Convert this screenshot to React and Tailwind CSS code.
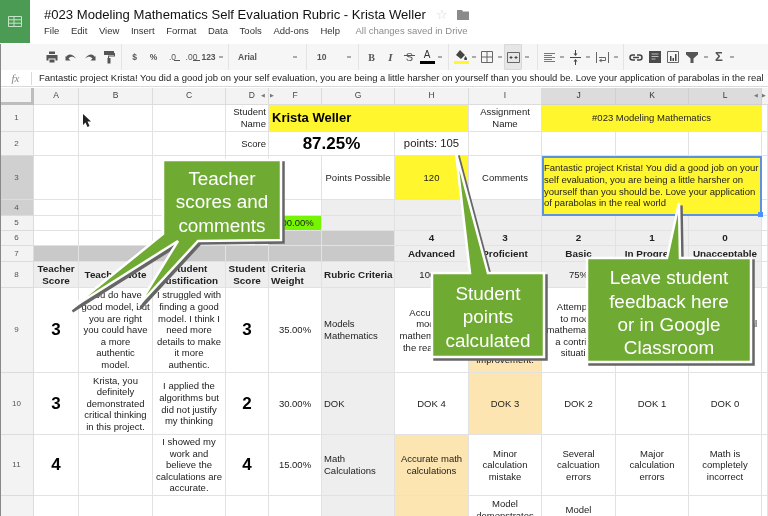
const menus = ['File', 'Edit', 'View', 'Insert', 'Format', 'Data', 'Tools', 'Add-ons', 'Help']

function Tool({ w = 'w-[19px]', className = '', children }) {
  return <div className={`${w} h-[26px] shrink-0 flex items-center justify-center text-[#555] ${className}`}>{children}</div>
}

function Caret({ w = 'w-[9px]' }) {
  return (
    <div className={`${w} shrink-0 flex items-center justify-center`}>
      <div className="w-[4px] h-[1.5px] bg-[#aaa]" />
    </div>
  )
}

function Sep({ className = '' }) {
  return <div className={`w-px h-[26px] shrink-0 bg-[#e4e4e4] ${className}`} />
}

function Ico({ w = 14, h = 14, children }) {
  return (
    <svg width={w} height={h} viewBox={`0 0 ${w} ${h}`} fill="none">
      {children}
    </svg>
  )
}

function Toolbar() {
  return (
    <div className="h-[26px] bg-[#f6f6f6] flex items-center pl-[42px] text-[8.5px] font-bold">
      <Tool>
        <Ico>
          <path d="M4 1.5h6v2.5H4zM1.5 5h11v5.5h-2V8.5h-7v2h-2zM4.500 9.500h5v3h-5z" fill="#555" />
        </Ico>
      </Tool>
      <Tool>
        <Ico>
          <path d="M2 7c2-3.500 6.500-3.500 10 1.500C9 6 6.500 6 4.500 8.500L6.500 10.500H1.500V5.500z" fill="#555" />
        </Ico>
      </Tool>
      <Tool>
        <Ico>
          <path d="M12 7C10 3.500 5.500 3.500 2 8.500 5 6 7.500 6 9.500 8.500L7.500 10.500h5V5.500z" fill="#555" />
        </Ico>
      </Tool>
      <Tool>
        <Ico>
          <path d="M2 1h10v4H2zM12 3h1v3.500H7v1.500H8.500v5.500h-3V8H6V5.500h6z" fill="#555" />
        </Ico>
      </Tool>
      <Sep className="ml-[3px] mr-[3px]" />
      <Tool>$</Tool>
      <Tool>%</Tool>
      <Tool>
        <div className="relative font-normal">
          .0
          <div className="absolute left-[5px] top-[9px] w-[6px] h-[1.5px] bg-[#555]" />
        </div>
      </Tool>
      <Tool>
        <div className="relative font-normal">
          .00
          <div className="absolute left-[7px] top-[9px] w-[7px] h-[1.5px] bg-[#555]" />
        </div>
      </Tool>
      <Tool w="w-[15px]">123</Tool>
      <Caret />
      <Sep className="ml-[3px]" />
      <div className="w-[61px] shrink-0 pl-[9px] text-[#555]">Arial</div>
      <Caret />
      <Sep className="ml-[7px]" />
      <div className="w-[37px] shrink-0 pl-[10px] text-[#555]">10</div>
      <Caret />
      <Sep className="ml-[5px] mr-[3px]" />
      <Tool className="font-['Liberation_Serif',serif] text-[10px]">B</Tool>
      <Tool className="font-['Liberation_Serif',serif] text-[11px] italic">I</Tool>
      <Tool>
        <div className="relative text-[11px] font-normal">
          S
          <div className="absolute left-[-2px] top-[6px] w-[11px] h-px bg-[#555]" />
        </div>
      </Tool>
      <Tool w="w-[16px]">
        <div className="flex flex-col items-center text-[10px] font-normal leading-[10px] text-[#333]">
          A
          <div className="w-[15px] h-[2.5px] bg-black mt-[1px]" />
        </div>
      </Tool>
      <Caret w="w-[10px]" />
      <Sep className="ml-[3px] mr-[3px]" />
      <Tool w="w-[18px]">
        <div className="flex flex-col items-center">
          <Ico w={14} h={10}>
            <path d="M6 0l5 5-4 4-5-4zM11.500 6c1 1.500 1.500 2 1.500 3a1.300 1.300 0 0 1-2.800 0c0-1 .500-1.500 1.300-3z" fill="#444" />
          </Ico>
          <div className="w-[15px] h-[3px] bg-[#fff62e] mt-[1px]" />
        </div>
      </Tool>
      <Caret w="w-[8px]" />
      <Tool w="w-[18px]">
        <Ico w={12} h={12}>
          <path d="M.5.5h11v11H.5zM6 .5v11M.5 6h11" stroke="#666" />
        </Ico>
      </Tool>
      <Caret w="w-[8px]" />
      <Tool w="w-[18px]" className="bg-[#e6e6e6] border border-[#d8d8d8] rounded-[1px]">
        <Ico w={13} h={11}>
          <path d="M.5.5h12v10H.5z" stroke="#666" />
          <path d="M2.500 5.500h3M4 4v3M7.500 5.500h3M9 4v3" stroke="#444" />
        </Ico>
      </Tool>
      <Caret />
      <Sep className="ml-[6px] mr-[2px]" />
      <Tool w="w-[18px]">
        <Ico w={11} h={9}>
          <path d="M0 .5h11M0 2.500h8M0 4.500h11M0 6.500h8M0 8.500h11" stroke="#777" />
        </Ico>
      </Tool>
      <Caret w="w-[8px]" />
      <Tool w="w-[18px]">
        <Ico w={11} h={15}>
          <path d="M0 7.500h11M5.500 0v5M5.500 10v5" stroke="#444" />
          <path d="M3.500 3.500h4l-2 2.500zM3.500 11.500h4l-2-2.500z" fill="#444" />
        </Ico>
      </Tool>
      <Caret w="w-[8px]" />
      <Tool w="w-[20px]">
        <Ico w={13} h={11}>
          <path d="M.5 0v11M12.500 0v11M3 5.500h6.500v3H5" stroke="#666" />
          <path d="M3 8.500l2.500-2v4z" fill="#666" />
        </Ico>
      </Tool>
      <Caret w="w-[7px]" />
      <Sep className="ml-[4px] mr-[3px]" />
      <Tool w="w-[18px]">
        <Ico w={14} h={7}>
          <path d="M6 1H3.500a2.500 2.500 0 0 0 0 5H6M8 1h2.500a2.500 2.500 0 0 1 0 5H8M4 3.500h6" stroke="#444" strokeWidth="1.500" />
        </Ico>
      </Tool>
      <Tool>
        <Ico w={12} h={12}>
          <path d="M0 0h12v12H0z" fill="#4a4a4a" />
          <path d="M2.500 3h7M2.500 5.500h7M2.500 8h4" stroke="#bbb" />
        </Ico>
      </Tool>
      <Tool w="w-[18px]">
        <Ico w={14} h={14}>
          <path d="M1.500 1.500h11v11h-11z" stroke="#666" />
          <path d="M4 6h1.500v5H4zM6.500 8H8v3H6.500zM9 4h1.500v7H9z" fill="#444" />
        </Ico>
      </Tool>
      <Tool>
        <Ico w={12} h={11}>
          <path d="M0 0h12v2.500L7.500 6.500V11h-3V6.500L0 2.500z" fill="#555" />
        </Ico>
      </Tool>
      <Caret />
      <Tool w="w-[18px]" className="text-[13px]">Σ</Tool>
      <Caret w="w-[8px]" />
    </div>
  )
}

// one spreadsheet cell, lines are broken by hand with \n
function C({ className = '', children }) {
  return (
    <div className={`border-r border-b border-[#e2e2e2] flex items-center justify-center text-center whitespace-pre-line overflow-hidden min-w-0 ${className}`}>
      {children}
    </div>
  )
}

function RowHead({ dark, children }) {
  return (
    <div className={`border-r border-b border-[#dcdcdc] flex items-center justify-center text-[8px] text-[#555] ${dark ? 'bg-[#d0d0d0]' : 'bg-[#f3f3f3]'}`}>
      {children}
    </div>
  )
}

const num = 'text-[17px] font-bold text-black'
const grey = 'bg-[#eeeeee]'
const dark = 'bg-[#c9c9c9]'
const yellow = 'bg-[#fff62e]'
const orange = 'bg-[#fce5b0]'
const bold = 'font-bold text-[9.9px] bg-[#eeeeee]'

function Sheet() {
  return (
    <div className="mt-px grid grid-cols-[34px_45px_74px_73px_43px_53px_73px_74px_73px_74px_73px_73px_6px] grid-rows-[17px_27px_24px_44px_16px_15px_15px_16px_26px_85px_62px_61px_60px] text-[9.5px] leading-[11.6px] text-[#222]">
      <div className="bg-[#f3f3f3] border-r-[3px] border-b-[3px] border-[#bdbdbd]" />
      {['A', 'B', 'C'].map((h) => (
        <div key={h} className="bg-[#f3f3f3] border-r border-b border-[#dcdcdc] flex items-center justify-center text-[8.5px] text-[#444]">{h}</div>
      ))}
      <div className="bg-[#f3f3f3] border-r border-b border-[#dcdcdc] flex items-center justify-end pr-[3px] gap-[6px] text-[8.5px] text-[#444]">
        D <span className="text-[5px] text-[#777]">◀</span>
      </div>
      <div className="relative bg-[#f3f3f3] border-r border-b border-[#dcdcdc] flex items-center justify-center text-[8.5px] text-[#444]">
        <span className="absolute left-[1px] text-[5px] text-[#777]">▶</span>F
      </div>
      {['G', 'H', 'I'].map((h) => (
        <div key={h} className="bg-[#f3f3f3] border-r border-b border-[#dcdcdc] flex items-center justify-center text-[8.5px] text-[#444]">{h}</div>
      ))}
      {['J', 'K'].map((h) => (
        <div key={h} className="bg-[#dcdcdc] border-r border-b border-[#d0d0d0] flex items-center justify-center text-[8.5px] text-[#333]">{h}</div>
      ))}
      <div className="relative bg-[#dcdcdc] border-r border-b border-[#d0d0d0] flex items-center justify-center text-[8.5px] text-[#333]">
        L<span className="absolute right-[3px] text-[5px] text-[#777]">◀</span>
      </div>
      <div className="bg-[#f3f3f3] border-b border-[#dcdcdc] flex items-center text-[5px] text-[#777]">▶</div>

      <RowHead>1</RowHead>
      <C /><C /><C />
      <C className="justify-end text-right pr-[2px]">{'Student\nName'}</C>
      <C className={`col-span-3 justify-start pl-[3px] text-[13px] font-bold text-black ${yellow}`}>Krista Weller</C>
      <C>{'Assignment\nName'}</C>
      <C className={`col-span-3 ${yellow}`}>#023 Modeling Mathematics</C>
      <C />

      <RowHead>2</RowHead>
      <C /><C /><C />
      <C className="justify-end pr-[2px]">Score</C>
      <C className="col-span-2 text-[17px] font-bold text-black">87.25%</C>
      <C className="text-[11.3px]">points: 105</C>
      <C /><C /><C /><C /><C />

      <RowHead dark>3</RowHead>
      <C /><C /><C /><C /><C />
      <C>Points Possible</C>
      <C className={yellow}>120</C>
      <C>Comments</C>
      <div className={`relative col-span-3 row-span-2 border-2 border-[#5b93e0] flex items-center pb-[1px] ${yellow}`}>
        <div className="whitespace-pre-line">
          {'Fantastic project Krista! You did a good job on your\nself evaluation, you are being a little harsher on\nyourself than you should be. Love your application\nof parabolas in the real world'}
        </div>
        <div className="absolute right-[-3px] bottom-[-3px] w-[5px] h-[5px] bg-[#4d90fe]" />
      </div>
      <C />

      <RowHead dark>4</RowHead>
      <C /><C /><C /><C /><C />
      <C className={grey} /><C className={grey} /><C className={grey} />
      <C />

      <RowHead>5</RowHead>
      <C /><C /><C /><C />
      <C className="bg-[#76f500]">100.00%</C>
      <C className={grey} /><C className={grey} /><C className={grey} /><C className={grey} /><C className={grey} /><C className={grey} />
      <C />

      <RowHead>6</RowHead>
      <C /><C /><C /><C />
      <C className={dark} /><C className={dark} />
      <C className={bold}>4</C><C className={bold}>3</C><C className={bold}>2</C><C className={bold}>1</C><C className={bold}>0</C>
      <C />

      <RowHead>7</RowHead>
      <C className={dark} /><C className={dark} /><C className={dark} /><C className={dark} /><C className={dark} /><C className={dark} />
      <C className={bold}>Advanced</C><C className={bold}>Proficient</C><C className={bold}>Basic</C><C className={bold}>In Progress</C><C className={bold}>Unacceptable</C>
      <C />

      <RowHead>8</RowHead>
      <C className={bold}>{'Teacher\nScore'}</C>
      <C className={bold}>Teacher Note</C>
      <C className={bold}>{'Student\nJustification'}</C>
      <C className={bold}>{'Student\nScore'}</C>
      <C className={`${bold} justify-start pl-[2px] text-left`}>{'Criteria\nWeight'}</C>
      <C className={`${bold} justify-start pl-[2px] text-left whitespace-nowrap!`}>Rubric Criteria</C>
      <C className={grey}>100%</C><C className={grey}>85%</C><C className={grey}>75%</C><C className={grey}>65%</C><C className={grey}>0%</C>
      <C />

      <RowHead>9</RowHead>
      <C className={num}>3</C>
      <C>{'You do have\ngood model, but\nyou are right\nyou could have\na more\nauthentic\nmodel.'}</C>
      <C>{'I struggled with\nfinding a good\nmodel. I think I\nneed more\ndetails to make\nit more\nauthentic.'}</C>
      <C className={num}>3</C>
      <C>35.00%</C>
      <C className={`${grey} justify-start pl-[2px] text-left`}>{'Models\nMathematics'}</C>
      <C>{'Accurately\nmodels\nmathematics in\nthe real world'}</C>
      <C className={`${orange} items-end pb-[6px]`}>improvement.</C>
      <C>{'Attempted\nto model\nmathematics in\na contrived\nsituation'}</C>
      <C>{'Model does\nnot fit\nthe situation'}</C>
      <C>{'Did not create\na mathematical\nmodel of the\nsituation'}</C>
      <C />

      <RowHead>10</RowHead>
      <C className={num}>3</C>
      <C>{'Krista, you\ndefinitely\ndemonstrated\ncritical thinking\nin this project.'}</C>
      <C>{'I applied the\nalgorithms but\ndid not justify\nmy thinking'}</C>
      <C className={num}>2</C>
      <C>30.00%</C>
      <C className={`${grey} justify-start pl-[2px] text-left`}>DOK</C>
      <C>DOK 4</C>
      <C className={orange}>DOK 3</C>
      <C>DOK 2</C>
      <C>DOK 1</C>
      <C>DOK 0</C>
      <C />

      <RowHead>11</RowHead>
      <C className={num}>4</C>
      <C />
      <C>{'I showed my\nwork and\nbelieve the\ncalculations are\naccurate.'}</C>
      <C className={num}>4</C>
      <C>15.00%</C>
      <C className={`${grey} justify-start pl-[2px] text-left`}>{'Math\nCalculations'}</C>
      <C className={orange}>{'Accurate math\ncalculations'}</C>
      <C>{'Minor\ncalculation\nmistake'}</C>
      <C>{'Several\ncalcuation\nerrors'}</C>
      <C>{'Major\ncalculation\nerrors'}</C>
      <C>{'Math is\ncompletely\nincorrect'}</C>
      <C />

      <RowHead />
      <C /><C /><C /><C /><C />
      <C className={grey} />
      <C className={orange} />
      <C className="items-start pt-[2px]">{'Model\ndemonstrates'}</C>
      <C className="items-start pt-[8px]">{'Model\nis'}</C>
      <C /><C /><C />
    </div>
  )
}

const callouts = [
  '163,160 281,160 281,240 198,241 138,306 178,241 70,309 163,234',
  '432,273 470,273 456,153 488,273 544,273 544,357 432,357',
  '587,258 667,258 679,203 680,258 751,258 751,362 587,362',
]

function CalloutShapes() {
  return (
    <svg className="absolute inset-0" width="768" height="516" viewBox="0 0 768 516">
      {callouts.map((p) => (
        <polygon key={p} points={p} transform="translate(2.5 2.5)" fill="#666" stroke="#666" strokeWidth="2.5" />
      ))}
      {callouts.map((p) => (
        <polygon key={p} points={p} fill="#6fab32" stroke="#fff" strokeWidth="2.5" />
      ))}
    </svg>
  )
}

function CalloutText({ className, children }) {
  return (
    <div className={`absolute flex items-center justify-center text-center whitespace-pre-line text-white text-[18.9px] leading-[23.3px] ${className}`}>
      {children}
    </div>
  )
}

export default function App() {
  return (
    <div className="relative w-[768px] h-[516px] overflow-hidden bg-white font-['Liberation_Sans',Arial,sans-serif] blur-[0.35px]">
      <div className="h-[44px] flex">
        <div className="w-[30px] h-[43px] bg-[#4b9b55] flex items-center justify-center">
          <svg width="14" height="11" viewBox="0 0 14 11" fill="none">
            <path d="M.5.5h13v10H.5zM.5 3.800h13M.5 7.200h13M6 .5v10" stroke="#c4e3c9" />
          </svg>
        </div>
        <div className="pl-[14px]">
          <div className="flex items-center h-[27px] pt-[2px]">
            <div className="text-[13.1px] text-[#111] whitespace-nowrap">#023 Modeling Mathematics Self Evaluation Rubric - Krista Weller</div>
            <span className="ml-[10px] text-[13px] text-[#d5d5d5]">☆</span>
            <svg className="ml-[9px]" width="12" height="10" viewBox="0 0 12 10">
              <path d="M0 0h5l1 1.500h6V10H0z" fill="#8a8a8a" />
            </svg>
          </div>
          <div className="flex items-center gap-[11.6px] h-[11px] mt-[-1px] text-[9.5px] text-[#333]">
            {menus.map((m) => (
              <span key={m}>{m}</span>
            ))}
            <span className="ml-[4px] text-[#8c8c8c]">All changes saved in Drive</span>
          </div>
        </div>
      </div>
      <Toolbar />
      <div className="h-[17px] flex items-center border-b border-[#d9d9d9]">
        <div className="w-[32px] shrink-0 border-r border-[#d9d9d9] h-[13px] flex items-center justify-center font-['Liberation_Serif',serif] italic text-[11px] text-[#888]">fx</div>
        <div className="pl-[7px] text-[9.45px] text-[#222] whitespace-nowrap">
          Fantastic project Krista! You did a good job on your self evaluation, you are being a little harsher on yourself than you should be. Love your application of parabolas in the real
        </div>
      </div>
      <Sheet />
      <div className="absolute left-0 top-[44px] bottom-0 w-px bg-[#888]" />
      <svg className="absolute left-[82px] top-[114px]" width="9" height="14" viewBox="0 0 9 14">
        <path d="M1 0v11l2.500-2.500L5.500 13l2-1-2-4.500H9z" fill="#222" />
      </svg>
      <CalloutShapes />
      <CalloutText className="left-[163px] top-[162px] w-[118px] h-[80px]">{'Teacher\nscores and\ncomments'}</CalloutText>
      <CalloutText className="left-[432px] top-[275px] w-[112px] h-[84px]">{'Student\npoints\ncalculated'}</CalloutText>
      <CalloutText className="left-[587px] top-[261px] w-[164px] h-[104px]">{'Leave student\nfeedback here\nor in Google\nClassroom'}</CalloutText>
    </div>
  )
}
